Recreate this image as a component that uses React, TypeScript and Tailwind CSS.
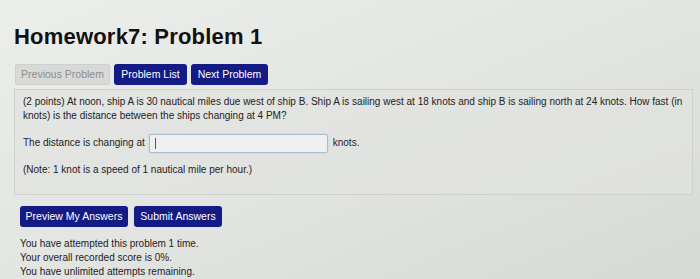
import React from "react";

export default function App() {
  const font = { fontFamily: '"Liberation Sans", Arial, sans-serif' };
  return (
    <div
      style={font}
      className="w-[700px] h-[279px] overflow-hidden bg-gradient-to-br from-[#eceeec] via-[#e3e5e2] to-[#d6d9d5] text-[#1e1e1e]"
    >
      <div className="pl-[14px] pt-[23px]">
        <h1 className="text-[22px] leading-[28px] font-bold text-[#111] tracking-[0.2px]">
          Homework7: Problem 1
        </h1>
      </div>
      <div className="flex gap-[4px] pl-[15px] mt-[13px] h-[21px] text-[10.5px]">
        <div className="w-[95px] flex items-center justify-center rounded-[2px] bg-[#d9dad8] border border-[#cfd0ce] text-[#8c8c8c]">
          Previous Problem
        </div>
        <div className="w-[73px] flex items-center justify-center rounded-[3px] bg-[#141b84] text-white">
          Problem List
        </div>
        <div className="w-[77px] flex items-center justify-center rounded-[3px] bg-[#141b84] text-white">
          Next Problem
        </div>
      </div>
      <div className="mx-[14px] w-[679px] mt-[4px] h-[106px] border border-[#cfd1ce] bg-[#e1e3e0]/70 pl-[8px] pr-[6px] pt-[5px] text-[10px] leading-[14px] text-[#222]">
        <p>
          (2 points) At noon, ship A is 30 nautical miles due west of ship B. Ship A is sailing west at 18 knots and ship B is sailing north at 24 knots. How fast (in knots) is the distance between the ships changing at 4 PM?
        </p>
        <div className="flex items-center mt-[10px] h-[20px]">
          <span>The distance is changing at</span>
          <div className="ml-[4px] w-[179px] h-[19px] border border-[#a9bdd0] bg-[#eef0f0] rounded-[2px] flex items-center pl-[5px] shadow-[0_0_2px_#b9cde0]">
            <div className="w-px h-[11px] bg-[#555]" />
          </div>
          <span className="ml-[5px]">knots.</span>
        </div>
        <p className="mt-[10px]">(Note: 1 knot is a speed of 1 nautical mile per hour.)</p>
      </div>
      <div className="flex gap-[6px] pl-[20px] mt-[11px] h-[21px] text-[10.5px]">
        <div className="w-[108px] flex items-center justify-center rounded-[3px] bg-[#141b84] text-white">
          Preview My Answers
        </div>
        <div className="w-[88px] flex items-center justify-center rounded-[3px] bg-[#141b84] text-white">
          Submit Answers
        </div>
      </div>
      <div className="pl-[20px] mt-[10px] text-[10px] leading-[14px] text-[#222]">
        <p>You have attempted this problem 1 time.</p>
        <p>Your overall recorded score is 0%.</p>
        <p>You have unlimited attempts remaining.</p>
      </div>
    </div>
  );
}
